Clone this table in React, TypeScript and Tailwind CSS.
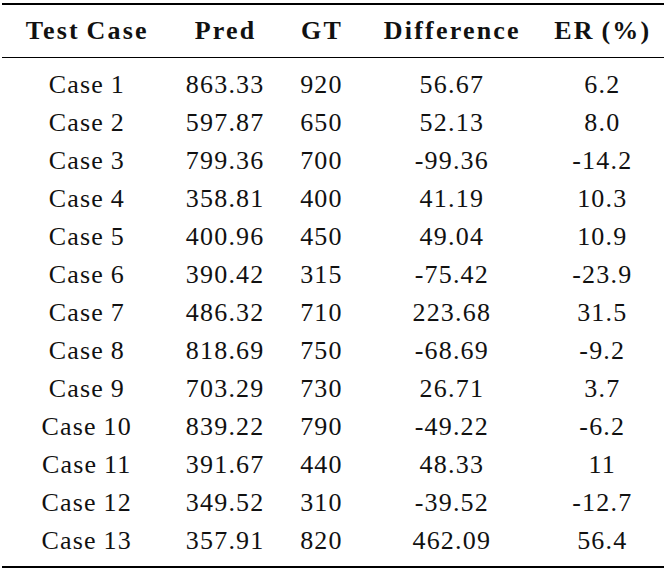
const rows: [string, string, string, string, string][] = [
  ["Case 1", "863.33", "920", "56.67", "6.2"],
  ["Case 2", "597.87", "650", "52.13", "8.0"],
  ["Case 3", "799.36", "700", "-99.36", "-14.2"],
  ["Case 4", "358.81", "400", "41.19", "10.3"],
  ["Case 5", "400.96", "450", "49.04", "10.9"],
  ["Case 6", "390.42", "315", "-75.42", "-23.9"],
  ["Case 7", "486.32", "710", "223.68", "31.5"],
  ["Case 8", "818.69", "750", "-68.69", "-9.2"],
  ["Case 9", "703.29", "730", "26.71", "3.7"],
  ["Case 10", "839.22", "790", "-49.22", "-6.2"],
  ["Case 11", "391.67", "440", "48.33", "11"],
  ["Case 12", "349.52", "310", "-39.52", "-12.7"],
  ["Case 13", "357.91", "820", "462.09", "56.4"],
];

const widths = ["w-[168px]", "w-[108px]", "w-[84px]", "w-[176px]", "w-[124px]"];
const headers = ["Test Case", "Pred", "GT", "Difference", "ER (%)"];

export default function App() {
  return (
    <div className="min-h-screen bg-white pt-[3px] pl-[2px] text-[#111] font-['Liberation_Serif','DejaVu_Serif',serif]">
      <table className="w-[662px] table-fixed border-collapse text-[26px]">
        <colgroup>
          {widths.map((w, i) => (
            <col key={i} className={w} />
          ))}
        </colgroup>
        <thead>
          {/* top rule + header */}
          <tr className="border-t-2 border-b border-black">
            {headers.map((h) => (
              <th
                key={h}
                className="p-0 pt-[7px] pb-[7px] pl-[2px] h-[52px] leading-[38px] text-center font-bold tracking-[2.2px] [word-spacing:-2px]"
              >
                {h}
              </th>
            ))}
          </tr>
        </thead>
        <tbody>
          {rows.map((r, i) => {
            const first = i === 0;
            const last = i === rows.length - 1;
            return (
              <tr key={r[0]} className={last ? "border-b-2 border-black" : ""}>
                {r.map((c, j) => (
                  <td
                    key={j}
                    className={`p-0 pl-[1px] leading-[38px] text-center tracking-[1.2px] [word-spacing:-1px] ${first ? "pt-[8px]" : ""} ${last ? "pb-[6px]" : ""}`}
                  >
                    {c}
                  </td>
                ))}
              </tr>
            );
          })}
        </tbody>
      </table>
    </div>
  );
}
